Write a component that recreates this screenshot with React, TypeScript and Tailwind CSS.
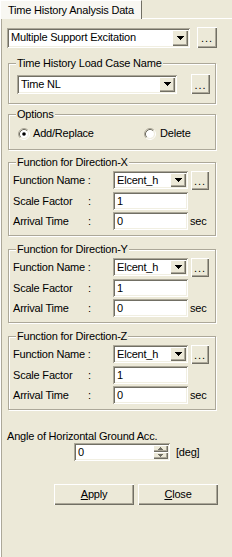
import React from "react";

const SUNKEN =
  "shadow-[inset_1px_1px_0_#aca899,inset_-1px_-1px_0_#ffffff,inset_2px_2px_0_#716f64,inset_-2px_-2px_0_#f1efe2]";
const RAISED =
  "shadow-[inset_1px_1px_0_#ffffff,inset_-1px_-1px_0_#716f64,inset_-2px_-2px_0_#aca899]";

function DownArrow() {
  return (
    <svg width="7" height="4" viewBox="0 0 7 4" shapeRendering="crispEdges">
      <rect x="0" y="0" width="7" height="1" fill="#000" />
      <rect x="1" y="1" width="5" height="1" fill="#000" />
      <rect x="2" y="2" width="3" height="1" fill="#000" />
      <rect x="3" y="3" width="1" height="1" fill="#000" />
    </svg>
  );
}

function Combo({ className, text }: { className: string; text: string }) {
  return (
    <div className={`${className} bg-white ${SUNKEN} flex items-stretch p-[2px]`}>
      <span className="flex-1 pl-[2px] whitespace-nowrap overflow-hidden flex items-center">{text}</span>
      <div className={`w-[16px] bg-[#ece9d8] ${RAISED} flex items-center justify-center`}>
        <DownArrow />
      </div>
    </div>
  );
}

function Dots({ className }: { className: string }) {
  return (
    <div className={`${className} bg-[#ece9d8] ${RAISED} flex items-center justify-center`}>
      <span className="leading-[11px] pt-[2px] tracking-[1px]">...</span>
    </div>
  );
}

function Input({ className, text }: { className: string; text: string }) {
  return (
    <div className={`${className} bg-white ${SUNKEN} flex items-center pl-[4px]`}>
      <span>{text}</span>
    </div>
  );
}

function Group({
  label,
  className,
  children,
}: {
  label: string;
  className: string;
  children?: React.ReactNode;
}) {
  return (
    <div
      className={`relative shrink-0 border border-[#aca899] shadow-[1px_1px_0_#ffffff,inset_1px_1px_0_#ffffff] ${className}`}
    >
      <span className="absolute left-[7px] -top-[7px] px-[1px] bg-[#ece9d8] leading-[13px] whitespace-nowrap">
        {label}
      </span>
      {children}
    </div>
  );
}

function Radio({ checked }: { checked: boolean }) {
  return (
    <svg width="12" height="12" viewBox="0 0 12 12">
      <circle cx="6" cy="6" r="4" fill="#fff" />
      <path d="M2.11 9.89A5.5 5.5 0 0 1 9.89 2.11" stroke="#aca899" fill="none" />
      <path d="M9.89 2.11A5.5 5.5 0 0 1 2.11 9.89" stroke="#ffffff" fill="none" />
      <path d="M2.82 9.18A4.5 4.5 0 0 1 9.18 2.82" stroke="#716f64" fill="none" />
      <path d="M9.18 2.82A4.5 4.5 0 0 1 2.82 9.18" stroke="#f1efe2" fill="none" />
      {checked && <circle cx="6" cy="6" r="1.8" fill="#000" />}
    </svg>
  );
}

function DirGroup({ dir, top }: { dir: string; top: string }) {
  return (
    <Group label={`Function for Direction-${dir}`} className={`${top} ml-[7px] w-[208px] h-[74px] pl-[4px] pt-[8px]`}>
      <div className="flex items-center h-[18px]">
        <span className="w-[100px] whitespace-nowrap">Function Name :</span>
        <Combo className="w-[75px] h-[18px]" text="Elcent_h" />
        <Dots className="ml-[3px] w-[18px] h-[19px]" />
      </div>
      <div className="flex items-center h-[18px] mt-[3px]">
        <span className="w-[75px] whitespace-nowrap">Scale Factor</span>
        <span className="w-[25px]">:</span>
        <Input className="w-[75px] h-[18px]" text="1" />
      </div>
      <div className="flex items-center h-[18px] mt-[2px]">
        <span className="w-[75px] whitespace-nowrap">Arrival Time</span>
        <span className="w-[25px]">:</span>
        <Input className="w-[75px] h-[18px]" text="0" />
        <span className="ml-[2px]">sec</span>
      </div>
    </Group>
  );
}

function SpinArrow({ up }: { up: boolean }) {
  return (
    <svg width="5" height="3" viewBox="0 0 5 3" shapeRendering="crispEdges">
      {up ? (
        <>
          <rect x="2" y="0" width="1" height="1" fill="#716f64" />
          <rect x="1" y="1" width="3" height="1" fill="#716f64" />
          <rect x="0" y="2" width="5" height="1" fill="#716f64" />
        </>
      ) : (
        <>
          <rect x="0" y="0" width="5" height="1" fill="#716f64" />
          <rect x="1" y="1" width="3" height="1" fill="#716f64" />
          <rect x="2" y="2" width="1" height="1" fill="#716f64" />
        </>
      )}
    </svg>
  );
}

export default function App() {
  return (
    <div className="w-[232px] h-[557px] bg-[#ece9d8] flex flex-col text-[11px] leading-[13px] tracking-[-0.2px] text-black font-['Liberation_Sans',Arial,sans-serif] overflow-hidden">
      <div className="flex h-[19px] shrink-0">
        <div className="w-[142px] h-[19px] bg-[#f8f7f2] border-l border-t border-white border-r border-r-[#716f64] pl-[7px] pt-[3px] whitespace-nowrap">
          Time History Analysis Data
        </div>
        <div className="flex-1 border-b border-white" />
      </div>
      <div className="flex-1 flex flex-col border-l border-white shadow-[inset_1px_0_0_#aca899]">
        <div className="flex items-center mt-[8px] pl-[6px] shrink-0">
          <Combo className="w-[183px] h-[20px]" text="Multiple Support Excitation" />
          <Dots className="ml-[7px] w-[20px] h-[21px]" />
        </div>

        <Group label="Time History Load Case Name" className="mt-[15px] ml-[7px] w-[208px] h-[41px] pt-[10px] pl-[8px]">
          <div className="flex items-center">
            <Combo className="w-[160px] h-[19px]" text="Time NL" />
            <Dots className="ml-[14px] w-[19px] h-[20px]" />
          </div>
        </Group>

        <Group label="Options" className="mt-[10px] ml-[7px] w-[208px] h-[36px] pt-[12px] pl-[9px]">
          <div className="flex items-center h-[13px]">
            <div className="w-[126px] flex items-center">
              <Radio checked />
              <span className="ml-[3px]">Add/Replace</span>
            </div>
            <div className="flex items-center">
              <Radio checked={false} />
              <span className="ml-[4px]">Delete</span>
            </div>
          </div>
        </Group>

        <DirGroup dir="X" top="mt-[12px]" />
        <DirGroup dir="Y" top="mt-[13px]" />
        <DirGroup dir="Z" top="mt-[13px]" />

        <div className="mt-[20px] pl-[6px] whitespace-nowrap shrink-0">Angle of Horizontal Ground Acc.</div>
        <div className="flex items-center ml-[73px] shrink-0">
          <div className={`w-[96px] h-[18px] bg-white ${SUNKEN} flex items-stretch p-[2px]`}>
            <span className="flex-1 pl-[2px] flex items-center">0</span>
            <div className="w-[15px] flex flex-col">
              <div className={`flex-1 bg-[#ece9d8] ${RAISED} flex items-center justify-center`}>
                <SpinArrow up />
              </div>
              <div className={`flex-1 bg-[#ece9d8] ${RAISED} flex items-center justify-center`}>
                <SpinArrow up={false} />
              </div>
            </div>
          </div>
          <span className="ml-[6px]">[deg]</span>
        </div>

        <div className="flex mt-[23px] ml-[53px] shrink-0">
          <div className={`w-[80px] h-[21px] bg-[#ece9d8] ${RAISED} flex items-center justify-center`}>
            <span>
              <span className="underline">A</span>pply
            </span>
          </div>
          <div className={`ml-[4px] w-[80px] h-[21px] bg-[#ece9d8] ${RAISED} flex items-center justify-center`}>
            <span>
              <span className="underline">C</span>lose
            </span>
          </div>
        </div>
      </div>
    </div>
  );
}
